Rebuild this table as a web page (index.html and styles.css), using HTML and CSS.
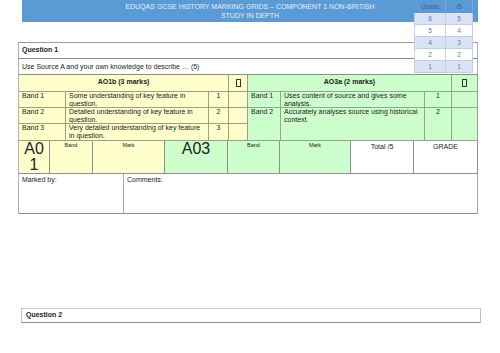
FILE: index.html
```html
<!DOCTYPE html>
<html>
<head>
<meta charset="utf-8">
<link rel="stylesheet" href="styles.css">
</head>
<body>
<div class="page">
  <header class="banner">EDUQAS GCSE HISTORY MARKING GRIDS – COMPONENT 1 NON-BRITISH<br>STUDY IN DEPTH</header>

  <table class="grades">
    <tr class="g-head"><td>Grade</td><td>/5</td></tr>
    <tr class="g-tint"><td>6</td><td>5</td></tr>
    <tr class="g-plain"><td>5</td><td>4</td></tr>
    <tr class="g-tint"><td>4</td><td>3</td></tr>
    <tr class="g-plain"><td>2</td><td>2</td></tr>
    <tr class="g-tint"><td>1</td><td>1</td></tr>
  </table>

  <section class="q1">
    <div class="qtitle">Question 1</div>
    <div class="qprompt">Use Source A and your own knowledge to describe … (5)</div>
    <div class="ao">
      <div class="ao-left">
        <div class="cell head span3">AO1b (3 marks)</div>
        <div class="cell tick"><span class="box"></span></div>
        <div class="cell">Band 1</div>
        <div class="cell">Some understanding of key feature in question.</div>
        <div class="cell num">1</div>
        <div class="cell"></div>
        <div class="cell">Band 2</div>
        <div class="cell">Detailed understanding of key feature in question.</div>
        <div class="cell num">2</div>
        <div class="cell"></div>
        <div class="cell">Band 3</div>
        <div class="cell">Very detailed understanding of key feature in question.</div>
        <div class="cell num">3</div>
        <div class="cell"></div>
      </div>
      <div class="ao-right">
        <div class="cell head span3">AO3a (2 marks)</div>
        <div class="cell tick"><span class="box"></span></div>
        <div class="cell">Band 1</div>
        <div class="cell">Uses content of source and gives some analysis.</div>
        <div class="cell num">1</div>
        <div class="cell"></div>
        <div class="cell tall">Band 2</div>
        <div class="cell tall">Accurately analyses source using historical context.</div>
        <div class="cell num tall">2</div>
        <div class="cell tall"></div>
      </div>
    </div>
    <div class="summary">
      <div class="cell yel big">A0<br>1</div>
      <div class="cell yel tiny">Band</div>
      <div class="cell yel tiny">Mark</div>
      <div class="cell grn big">A03</div>
      <div class="cell grn tiny">Band</div>
      <div class="cell grn tiny">Mark</div>
      <div class="cell wht label">Total /5</div>
      <div class="cell wht label">GRADE</div>
    </div>
    <div class="marked">
      <div class="cell">Marked by:</div>
      <div class="cell">Comments:</div>
    </div>
  </section>

  <section class="q2">Question 2</section>
</div>
</body>
</html>
```

FILE: styles.css
```css
html, body {
  margin: 0;
  padding: 0;
  background: #ffffff;
}

.page {
  position: relative;
  width: 500px;
  height: 353px;
  font-family: "Liberation Sans", Arial, sans-serif;
  font-size: 7px;
  line-height: 8px;
  color: #222222;
}

.banner {
  margin-left: 22px;
  width: 456px;
  height: 22px;
  box-sizing: border-box;
  padding-top: 2px;
  background: #5b9bd5;
  color: #e6eef8;
  font-size: 7px;
  line-height: 9px;
  text-align: center;
}

.grades {
  position: absolute;
  left: 414px;
  top: 0;
  width: 59px;
  border-collapse: collapse;
  z-index: 2;
  font-size: 6.5px;
  color: #6378b0;
}
.grades td {
  height: 11px;
  padding: 0;
  text-align: center;
  border: 1px solid #c3cfe9;
  line-height: 10px;
}
.grades td:first-child { width: 30px; }
.grades .g-head td {
  background: #5b9bd5;
  color: #3e5c96;
  border-color: #5b9bd5;
  border-right-color: #7aa9dc;
}
.grades .g-tint td { background: #dae3f3; }
.grades .g-plain td { background: #ffffff; }

.q1 {
  margin-top: 20px;
  margin-left: 18px;
  width: 460px;
  box-sizing: border-box;
  border-top: 1px solid #9a9a9a;
  border-left: 1px solid #b0b0b0;
}

.cell {
  box-sizing: border-box;
  border-right: 1px solid #999999;
  border-bottom: 1px solid #999999;
  padding: 0 3px;
  overflow: hidden;
}

.qtitle {
  height: 16px;
  padding: 3px 3px 0;
  box-sizing: border-box;
  font-weight: bold;
  border-right: 1px solid #b0b0b0;
  border-bottom: 1px solid #8a8a8a;
}
.qprompt {
  height: 16px;
  padding: 4px 3px 0;
  box-sizing: border-box;
  border-right: 1px solid #b0b0b0;
  border-bottom: 1px solid #8a8a8a;
}

.ao {
  display: flex;
}
.ao-left, .ao-right {
  display: grid;
  grid-template-rows: 17px 16px 16px 17px;
}
.ao-left {
  width: 229px;
  grid-template-columns: 47px 143px 20px 19px;
  background: #ffffcc;
}
.ao-right {
  width: 230px;
  grid-template-columns: 33px 144px 27px 26px;
  background: #ccffcc;
}
.ao-right .cell { border-color: #8fa88f; }
.ao-left .cell { border-color: #a09f85; }

.head {
  font-weight: bold;
  text-align: center;
  padding-top: 3px;
}
.span3 { grid-column: span 3; }
.tick {
  display: flex;
  justify-content: center;
  padding-top: 4px;
}
.box {
  display: block;
  width: 3px;
  height: 6px;
  border: 1px solid #333333;
}
.num {
  text-align: center;
}
.tall { grid-row: span 2; }

.summary {
  display: grid;
  grid-template-columns: 31px 43px 72px 63px 52px 71px 63px 64px;
  height: 33px;
}
.summary .cell { border-color: #8f8f8f; }
.yel { background: #ffffcc; }
.grn { background: #ccffcc; }
.wht { background: #ffffff; }
.big {
  font-size: 16px;
  line-height: 16px;
  text-align: center;
  padding: 0;
}
.tiny {
  font-size: 5.5px;
  line-height: 6px;
  text-align: center;
  padding-top: 1px;
}
.label {
  text-align: center;
  padding-top: 2px;
}

.marked {
  display: grid;
  grid-template-columns: 105px 354px;
  height: 40px;
}
.marked .cell {
  padding-top: 2px;
  border-color: #a8a8a8;
  border-bottom-color: #8a8a8a;
}

.q2 {
  position: absolute;
  left: 21px;
  top: 308px;
  width: 460px;
  height: 15px;
  box-sizing: border-box;
  border-top: 1px solid #c8c8c8;
  border-left: 1px solid #c0c0c0;
  border-right: 1px solid #c0c0c0;
  border-bottom: 1px solid #8f8f8f;
  padding: 2px 4px 0;
  font-weight: bold;
}
```
